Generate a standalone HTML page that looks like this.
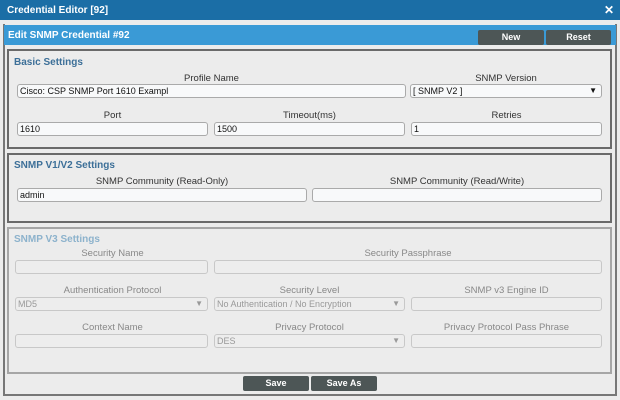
<!DOCTYPE html>
<html><head><style>
*{box-sizing:border-box;margin:0;padding:0}
body{width:620px;height:400px;background:#ececec;font-family:"Liberation Sans",sans-serif;position:relative;overflow:hidden;font-size:9px;color:#222}
.a{position:absolute}
.title{left:0;top:0;width:620px;height:20px;background:#1b6ea6;color:#fff;font-weight:bold;font-size:10px;line-height:22px;padding-left:7px}
.x{right:6px;top:1px;color:#fff;font-size:12px;font-weight:bold;line-height:18px}
.outer{left:3px;top:24px;width:614px;height:372px;border:2px solid #777;border-top:none;background:#ececec}
.hdr{left:4px;top:25px;width:612px;height:20px;background:#3a9ad6;color:#fff;font-weight:bold;font-size:10px;line-height:22px;padding-left:4px}
.btn{background:#4d5656;color:#fff;font-weight:bold;font-size:9px;text-align:center;line-height:15px;height:15px;border-radius:2px}
.box{border:2px solid #6a6a6a;background:#ececec}
.box.dis{border-color:#a6a6a6}
.st{font-weight:bold;font-size:10px;color:#3c6f98}
.dis .st{color:#8cb2cc}
.lbl{text-align:center;font-size:9.5px;color:#333}
.in{height:14px;border:1px solid #aaa;border-radius:3px;background:#f8f9fa;font-size:9px;line-height:12px;padding-left:2px;color:#111}
.dl{color:#888}
.din{border-color:#c8c8c8;background:#ededed;color:#999}
.arr{position:absolute;right:4px;top:0;font-size:8px}
</style></head><body>
<div class="a title">Credential Editor [92]</div>
<div class="a x">✕</div>
<div class="a outer"></div>
<div class="a hdr">Edit SNMP Credential #92</div>
<div class="a btn" style="left:478px;top:30px;width:66px">New</div>
<div class="a btn" style="left:546px;top:30px;width:65px">Reset</div>

<div class="a box" style="left:7px;top:49px;width:605px;height:100px"></div>
<div class="a st" style="left:14px;top:57px">Basic Settings</div>
<div class="a lbl" style="left:17px;top:73px;width:389px">Profile Name</div>
<div class="a lbl" style="left:410px;top:73px;width:192px">SNMP Version</div>
<div class="a in" style="left:17px;top:84px;width:389px">Cisco: CSP SNMP Port 1610 Exampl</div>
<div class="a in" style="left:410px;top:84px;width:192px">[ SNMP V2 ]<span class="arr">▼</span></div>
<div class="a lbl" style="left:17px;top:110px;width:191px">Port</div>
<div class="a lbl" style="left:214px;top:110px;width:191px">Timeout(ms)</div>
<div class="a lbl" style="left:411px;top:110px;width:191px">Retries</div>
<div class="a in" style="left:17px;top:122px;width:191px">1610</div>
<div class="a in" style="left:214px;top:122px;width:191px">1500</div>
<div class="a in" style="left:411px;top:122px;width:191px">1</div>

<div class="a box" style="left:7px;top:153px;width:605px;height:70px"></div>
<div class="a st" style="left:14px;top:160px">SNMP V1/V2 Settings</div>
<div class="a lbl" style="left:17px;top:176px;width:290px">SNMP Community (Read-Only)</div>
<div class="a lbl" style="left:312px;top:176px;width:290px">SNMP Community (Read/Write)</div>
<div class="a in" style="left:17px;top:188px;width:290px">admin</div>
<div class="a in" style="left:312px;top:188px;width:290px"></div>

<div class="a box dis" style="left:7px;top:227px;width:605px;height:147px"><div class="a st" style="left:5px;top:5px">SNMP V3 Settings</div></div>
<div class="a lbl dl" style="left:17px;top:248px;width:191px">Security Name</div>
<div class="a lbl dl" style="left:214px;top:248px;width:388px">Security Passphrase</div>
<div class="a in din" style="left:15px;top:260px;width:193px"></div>
<div class="a in din" style="left:214px;top:260px;width:388px"></div>
<div class="a lbl dl" style="left:17px;top:285px;width:191px">Authentication Protocol</div>
<div class="a lbl dl" style="left:214px;top:285px;width:191px">Security Level</div>
<div class="a lbl dl" style="left:411px;top:285px;width:191px">SNMP v3 Engine ID</div>
<div class="a in din" style="left:15px;top:297px;width:193px">MD5<span class="arr">▼</span></div>
<div class="a in din" style="left:214px;top:297px;width:191px">No Authentication / No Encryption<span class="arr">▼</span></div>
<div class="a in din" style="left:411px;top:297px;width:191px"></div>
<div class="a lbl dl" style="left:17px;top:322px;width:191px">Context Name</div>
<div class="a lbl dl" style="left:214px;top:322px;width:191px">Privacy Protocol</div>
<div class="a lbl dl" style="left:411px;top:322px;width:191px">Privacy Protocol Pass Phrase</div>
<div class="a in din" style="left:15px;top:334px;width:193px"></div>
<div class="a in din" style="left:214px;top:334px;width:191px">DES<span class="arr">▼</span></div>
<div class="a in din" style="left:411px;top:334px;width:191px"></div>

<div class="a btn" style="left:243px;top:376px;width:66px">Save</div>
<div class="a btn" style="left:311px;top:376px;width:66px">Save As</div>
</body></html>
